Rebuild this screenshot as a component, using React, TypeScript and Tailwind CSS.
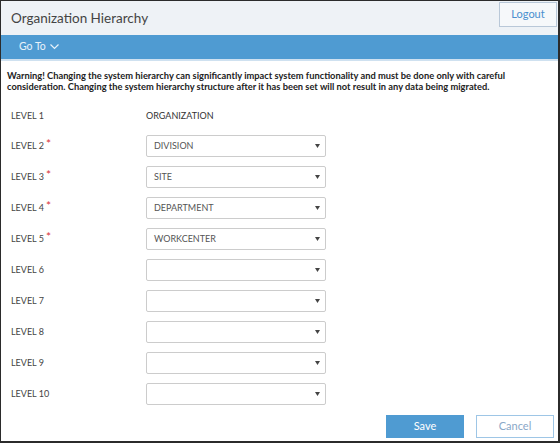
import React from 'react';

const levels = [
  { n: 2, value: 'DIVISION', required: true },
  { n: 3, value: 'SITE', required: true },
  { n: 4, value: 'DEPARTMENT', required: true },
  { n: 5, value: 'WORKCENTER', required: true },
  { n: 6, value: '', required: false },
  { n: 7, value: '', required: false },
  { n: 8, value: '', required: false },
  { n: 9, value: '', required: false },
  { n: 10, value: '', required: false },
];

const Caret = () => (
  <svg width="5" height="4" viewBox="0 0 5 4" className="shrink-0">
    <path d="M0 0 L5 0 L2.5 4 Z" fill="#444" />
  </svg>
);

const App = () => {
  return (
    <div
      className="w-[560px] h-[443px] bg-white border-l border-t border-r-2 border-b-2 border-[#2b2b2b] flex flex-col overflow-hidden text-[#333]"
      style={{ fontFamily: 'Lato, "Open Sans", sans-serif' }}
    >
      {/* header */}
      <div className="h-[34px] bg-[#eef2f6] flex items-start justify-between shrink-0">
        <h1 className="text-[13.5px] text-[#444] pl-[10px] pt-[9px] leading-[17px]">Organization Hierarchy</h1>
        <button className="mt-[1px] mr-[1px] w-[58px] h-[25px] border border-[#b9c8d8] bg-[#f6f8fa] text-[11px] text-[#4a8fcf]">
          Logout
        </button>
      </div>

      {/* nav */}
      <div className="h-[26px] bg-[#4f9bd2] border-b-2 border-[#cfe1f0] flex items-center pl-[18px] shrink-0">
        <span className="text-[10.5px] text-[#e8f2fa] flex items-center gap-[4px]">
          Go To
          <svg width="9" height="6" viewBox="0 0 9 6">
            <path d="M0.5 0.5 L4.5 4.5 L8.5 0.5" fill="none" stroke="#e8f2fa" strokeWidth="1.2" />
          </svg>
        </span>
      </div>

      {/* content */}
      <div className="flex flex-col pt-[9px]">
        <p className="pl-[6px] pr-[50px] text-[9.3px] leading-[11px] font-bold text-[#222]">
          Warning! Changing the system hierarchy can significantly impact system functionality and must be done only with careful consideration. Changing the system hierarchy structure after it has been set will not result in any data being migrated.
        </p>

        <div className="flex flex-col gap-[9px] mt-[13px]">
          <div className="flex items-center h-[21px] text-[9px]">
            <span className="w-[145px] pl-[10px] text-[#444]">LEVEL 1</span>
            <span className="text-[#333]">ORGANIZATION</span>
          </div>
          {levels.map((l) => (
            <div key={l.n} className="flex items-center h-[22px] text-[9px]">
              <span className="w-[145px] pl-[10px] text-[#444] flex items-start">
                LEVEL {l.n}
                {l.required && <span className="text-[#d9343a] text-[12px] leading-[10px] ml-[2px]">*</span>}
              </span>
              <div className="w-[180px] h-[22px] border border-[#ccc] rounded-[2px] bg-white flex items-center justify-between pl-[7px] pr-[5px]">
                <span className="text-[#555]">{l.value}</span>
                <Caret />
              </div>
            </div>
          ))}
        </div>

        <div className="flex justify-end gap-[12px] mt-[10px] pr-[4px]">
          <button className="w-[78px] h-[23px] bg-[#4f9bd2] text-white text-[11px]">Save</button>
          <button className="w-[78px] h-[23px] border border-[#9ec6e6] bg-white text-[#8aa7c7] text-[11px]">Cancel</button>
        </div>
      </div>
    </div>
  );
};

export default App;
